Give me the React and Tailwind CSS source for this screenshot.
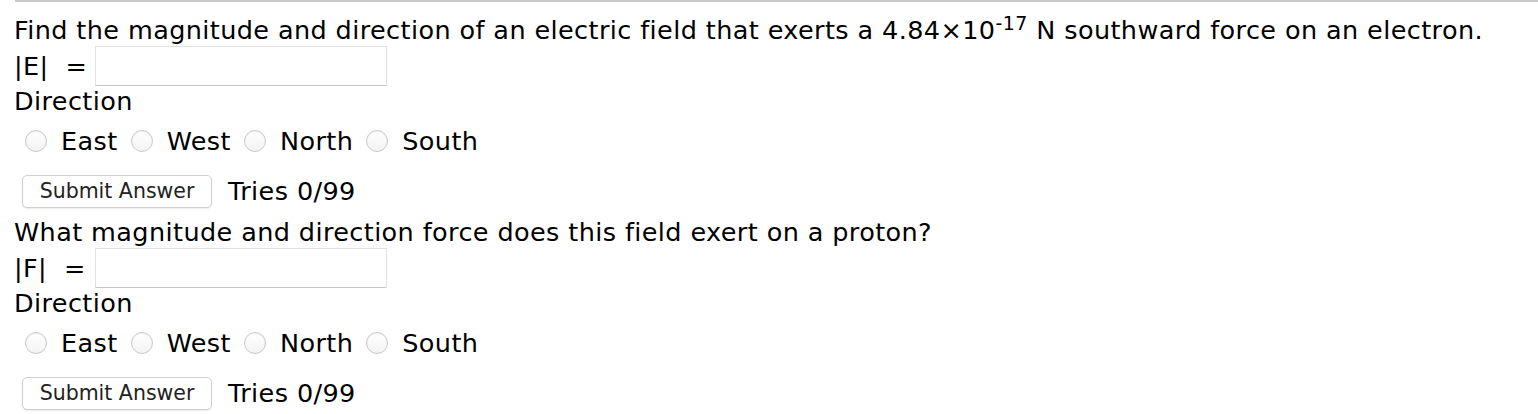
import React from "react";

const directions = ["East", "West", "North", "South"];

const Radio = ({ label }) => (
  <label className="flex items-center">
    <span className="w-[22px] h-[22px] rounded-full border border-[#c9c9c9] bg-gradient-to-b from-white to-[#f3f3f3] shadow-[inset_0_1px_1px_rgba(0,0,0,0.06)]" />
    <span className="ml-[14px] mr-[13px]">{label}</span>
  </label>
);

const Part = ({ question, symbol }) => (
  <div>
    <div className="h-[32px] leading-[32px] whitespace-nowrap">{question}</div>
    <div className="h-[40px] flex items-center">
      <span className="w-[81px] whitespace-pre">{symbol}  =</span>
      <div className="w-[292px] h-[40px] border border-[#e1e1e1] border-b-[#c6c6c6] bg-white" />
    </div>
    <div className="h-[30px] leading-[30px]">Direction</div>
    <div className="h-[50px] flex items-center pl-[11px]">
      {directions.map((d) => (
        <Radio key={d} label={d} />
      ))}
    </div>
    <div className="h-[50px] flex items-center pl-[8px]">
      <button className="h-[33px] w-[190px] rounded-[5px] border border-[#cfcfcf] bg-white text-[20.5px] tracking-normal text-[#222] shadow-[0_1px_1px_rgba(0,0,0,0.08)]">
        Submit Answer
      </button>
      <span className="ml-[16px]">Tries 0/99</span>
    </div>
  </div>
);

export default function App() {
  return (
    <div className="bg-white w-[1538px] h-[414px] overflow-hidden pl-[14px] text-black text-[25.5px] tracking-[0.4px] font-['DejaVu_Sans',Verdana,sans-serif]">
      <div className="ml-px h-[2px] bg-[#c8c8c8]" />
      <div className="pt-[12px]">
        <Part
          symbol="|E|"
          question={
            <>
              Find the magnitude and direction of an electric field that exerts a 4.84×10
              <sup className="text-[19px]">-17</sup> N southward force on an electron.
            </>
          }
        />
        <Part
          symbol="|F|"
          question="What magnitude and direction force does this field exert on a proton?"
        />
      </div>
    </div>
  );
}
